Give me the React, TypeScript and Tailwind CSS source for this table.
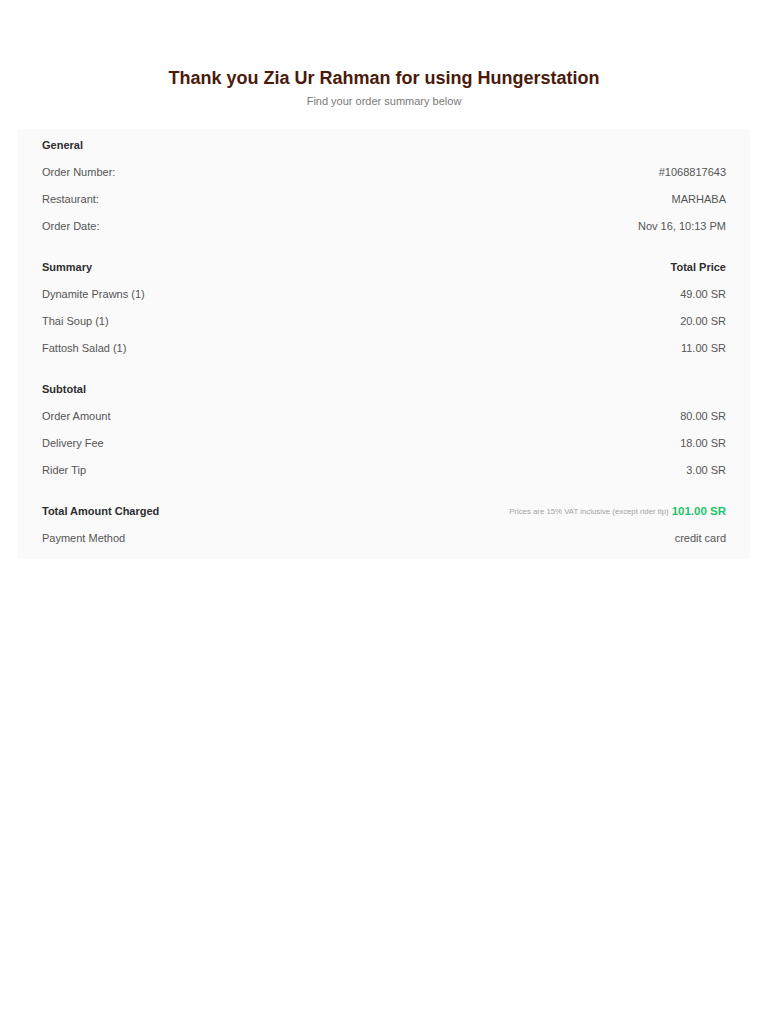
import React from "react";

type Row = { label: string; value?: React.ReactNode; head?: boolean };

const sections: Row[][] = [
  [
    { label: "General", head: true },
    { label: "Order Number:", value: "#1068817643" },
    { label: "Restaurant:", value: "MARHABA" },
    { label: "Order Date:", value: "Nov 16, 10:13 PM" },
  ],
  [
    { label: "Summary", value: "Total Price", head: true },
    { label: "Dynamite Prawns (1)", value: "49.00 SR" },
    { label: "Thai Soup (1)", value: "20.00 SR" },
    { label: "Fattosh Salad (1)", value: "11.00 SR" },
  ],
  [
    { label: "Subtotal", head: true },
    { label: "Order Amount", value: "80.00 SR" },
    { label: "Delivery Fee", value: "18.00 SR" },
    { label: "Rider Tip", value: "3.00 SR" },
  ],
  [
    {
      label: "Total Amount Charged",
      head: true,
      value: (
        <span className="flex items-center gap-[3px]">
          <span className="text-[7.8px] font-normal text-[#a3a3a3]">
            Prices are 15% VAT inclusive (except rider tip)
          </span>
          <span className="text-[11.5px] font-bold text-[#1ec46b]">101.00 SR</span>
        </span>
      ),
    },
    { label: "Payment Method", value: "credit card" },
  ],
];

export default function App() {
  return (
    <div className="min-h-[1024px] bg-white font-['Liberation_Sans',Arial,sans-serif]">
      <div className="pt-[65px] text-center">
        <h1 className="text-[18px] font-bold leading-[26px] text-[#4a1a0c]">
          Thank you Zia Ur Rahman for using Hungerstation
        </h1>
        <p className="mt-[2px] text-[11px] leading-[16px] text-[#7a7a7a]">
          Find your order summary below
        </p>
      </div>
      <div className="mx-[18px] mt-[20px] bg-[#fafafa] px-6 pb-[7px] pt-[3px]">
        {sections.map((rows, i) => (
          <div key={i} className={i > 0 ? "mt-[14px]" : ""}>
            {rows.map((r) => (
              <div
                key={r.label}
                className={`flex h-[27px] items-center justify-between text-[11px] ${
                  r.head ? "font-bold text-[#2e2e2e]" : "text-[#555555]"
                }`}
              >
                <span>{r.label}</span>
                {r.value && <span>{r.value}</span>}
              </div>
            ))}
          </div>
        ))}
      </div>
    </div>
  );
}
